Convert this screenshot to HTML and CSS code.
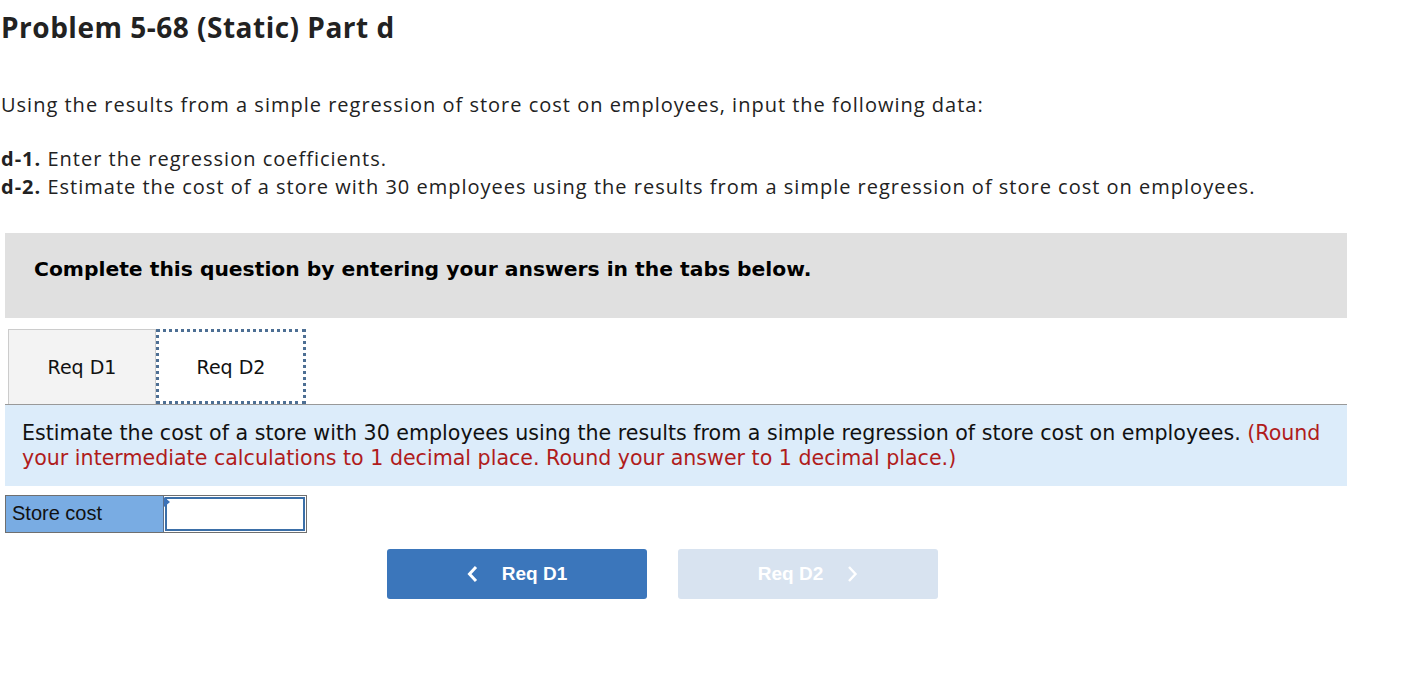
FILE: index.html
```html
<!DOCTYPE html>
<html lang="en">
<head>
    <meta charset="UTF-8">
    <title>Problem 5-68 (Static) Part d</title>
    <link rel="stylesheet" href="styles.css">
</head>
<body>
    <div class="page">
        <h1 class="title">Problem 5-68 (Static) Part d</h1>
        <p class="intro">Using the results from a simple regression of store cost on employees, input the following data:</p>
        <p class="steps">
            <b>d-1.</b> Enter the regression coefficients.<br>
            <b>d-2.</b> Estimate the cost of a store with 30 employees using the results from a simple regression of store cost on employees.
        </p>

        <div class="instructions">Complete this question by entering your answers in the tabs below.</div>

        <div class="tabs">
            <div class="tab">Req D1</div>
            <div class="tab tab-active">Req D2</div>
        </div>

        <div class="prompt">
            <span>Estimate the cost of a store with 30 employees using the results from a simple regression of store cost on employees.</span>
            <span class="hint">(Round your intermediate calculations to 1 decimal place. Round your answer to 1 decimal place.)</span>
        </div>

        <div class="answer-row">
            <label class="answer-label" for="storeCost">Store cost</label>
            <div class="answer-cell">
                <input type="text" id="storeCost" class="answer-input">
            </div>
        </div>

        <div class="nav">
            <button class="nav-btn nav-prev">
                <svg width="11" height="18" viewBox="0 0 11 18"><path d="M9 2 L2.5 9 L9 16" fill="none" stroke="#fff" stroke-width="3"/></svg>
                <span>Req D1</span>
            </button>
            <button class="nav-btn nav-next" disabled>
                <span>Req D2</span>
                <svg width="11" height="18" viewBox="0 0 11 18"><path d="M2 2 L8.5 9 L2 16" fill="none" stroke="#fff" stroke-width="2.4"/></svg>
            </button>
        </div>
    </div>
</body>
</html>
```

FILE: styles.css
```css
body {
    margin: 0;
    padding: 0;
    background-color: #fff;
    font-family: "Open Sans", "Lato", sans-serif;
    color: #222;
}
.page {
    width: 1346px;
    padding-left: 1px;
}
.title {
    margin: 0;
    padding-top: 10px;
    font-size: 28px;
    letter-spacing: 0.5px;
    font-weight: bold;
    line-height: 34px;
    color: #222;
}
.intro {
    margin: 47px 0 0 0;
    font-size: 20px;
    letter-spacing: 1px;
    line-height: 28px;
}
.steps {
    margin: 26px 0 0 0;
    font-size: 20px;
    letter-spacing: 1px;
    line-height: 28px;
}
.steps b {
    font-weight: bold;
}
.instructions {
    margin: 32px 0 0 4px;
    height: 85px;
    box-sizing: border-box;
    padding: 24px 0 0 29px;
    background-color: #e0e0e0;
    font-family: "DejaVu Sans", Verdana, sans-serif;
    font-weight: bold;
    font-size: 20.3px;
    color: #000;
}
.tabs {
    display: flex;
    margin: 11px 0 0 7px;
}
.tab {
    width: 148px;
    height: 75px;
    box-sizing: border-box;
    display: flex;
    align-items: center;
    justify-content: center;
    background-color: #f3f3f3;
    border: 1px solid #ccc;
    border-bottom: none;
    font-family: "DejaVu Sans", Verdana, sans-serif;
    font-size: 19px;
    color: #111;
}
.tab-active {
    width: 150px;
    background-color: #fff;
    border: 3px dotted #4d6f94;
}
.prompt {
    margin-left: 4px;
    box-sizing: border-box;
    height: 82px;
    padding: 16px 8px 0 17px;
    background-color: #dcecfa;
    border-top: 1px solid #999;
    font-family: "DejaVu Sans", Verdana, sans-serif;
    font-size: 20.6px;
    line-height: 25px;
    color: #111;
}
.hint {
    color: #b01c1c;
}
.answer-row {
    display: flex;
    width: 302px;
    height: 38px;
    margin: 9px 0 0 4px;
    box-sizing: border-box;
    border: 1px solid #6f6f6f;
}
.answer-label {
    width: 158px;
    background-color: #79ace3;
    font-family: "Liberation Sans", Arial, sans-serif;
    font-size: 20px;
    line-height: 34px;
    padding-left: 6px;
    box-sizing: border-box;
    color: #111;
    border-right: 1px solid #5a6f8c;
}
.answer-cell {
    position: relative;
    flex: 1;
    padding: 1px;
}
.answer-cell::before {
    content: "";
    position: absolute;
    top: 1px;
    left: 0;
    border-top: 5px solid transparent;
    border-bottom: 5px solid transparent;
    border-left: 6px solid #3b72b8;
}
.answer-input {
    width: 100%;
    height: 100%;
    box-sizing: border-box;
    border: 2px solid #3b6fa8;
    outline: none;
    margin: 0;
}
.nav {
    display: flex;
    gap: 31px;
    margin: 16px 0 0 386px;
}
.nav-btn {
    width: 260px;
    height: 50px;
    border: none;
    border-radius: 3px;
    display: flex;
    align-items: center;
    justify-content: center;
    gap: 24px;
    font-family: "Liberation Sans", Arial, sans-serif;
    font-weight: bold;
    font-size: 19px;
    color: #fff;
    cursor: pointer;
}
.nav-prev {
    background-color: #3b76bb;
}
.nav-next {
    background-color: #d8e3f0;
    cursor: default;
}
```
